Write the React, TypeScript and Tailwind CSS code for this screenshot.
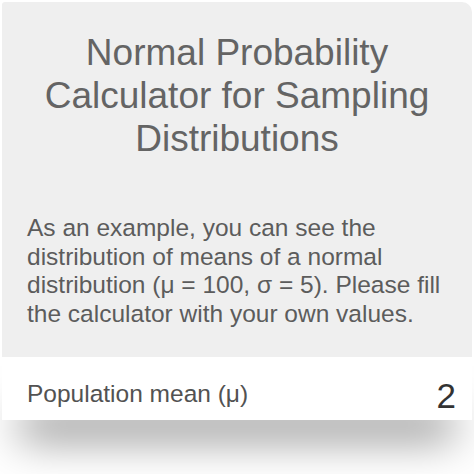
import React from "react";

export default function App() {
  return (
    <div className="w-[474px] h-[474px] bg-white p-[2px] overflow-hidden" style={{ fontFamily: '"Liberation Sans", Arial, sans-serif' }}>
      <div className="bg-[#efefef] rounded-tr-[10px] rounded-tl-[3px]">
        {/* Titulo */}
        <h1 className="pt-[29px] text-center text-[37px] leading-[43px] text-[#646464] font-normal">
          Normal Probability
          <br />
          Calculator for Sampling
          <br />
          Distributions
        </h1>

        {/* Texto de exemplo */}
        <p className="mt-[54px] pl-[25px] pr-[16px] pb-[28px] text-[24.5px] leading-[28.7px] text-[#5c5c5c]">
          As an example, you can see the distribution of means of a normal distribution (μ = 100, σ = 5). Please fill the calculator with your own values.
        </p>
      </div>

      {/* Campo */}
      <div className="bg-white h-[63px] pt-[12px] pl-[25px] pr-[16px] flex items-center justify-between shadow-[0_36px_44px_-18px_rgba(0,0,0,0.5)]">
        <span className="text-[24.5px] text-[#525252]">Population mean (μ)</span>
        <span className="text-[35px] mt-[4px] text-[#333333]">2</span>
      </div>
    </div>
  );
}
